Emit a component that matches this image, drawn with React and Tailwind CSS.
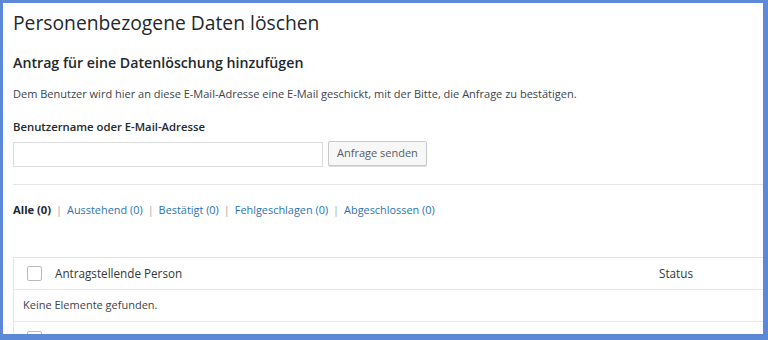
import React from 'react';

const filters = [
  { label: 'Ausstehend', count: 0 },
  { label: 'Bestätigt', count: 0 },
  { label: 'Fehlgeschlagen', count: 0 },
  { label: 'Abgeschlossen', count: 0 },
];

const Checkbox = () => (
  <span className="block w-[15px] h-[15px] border border-[#b7bbc0] rounded-[2px] bg-white shrink-0" />
);

const App = () => {
  return (
    <div
      className="w-[768px] h-[340px] overflow-hidden bg-white border-[#5b89d8] border-t-[3px] border-l-[3px] border-r-[5px] border-b-[6px] text-[#3c434a]"
      style={{ fontFamily: '"Open Sans", "Noto Sans", sans-serif' }}
    >
      <div className="pl-[10px] pt-[7px]">
        {/* Seitentitel */}
        <h1 className="text-[19.3px] leading-[26px] text-[#23282d] font-normal">
          Personenbezogene Daten löschen
        </h1>

        <h2 className="mt-[17px] text-[14.2px] leading-[20px] font-semibold text-[#23282d]">
          Antrag für eine Datenlöschung hinzufügen
        </h2>

        <p className="mt-[13px] text-[11px] leading-[16px]">
          Dem Benutzer wird hier an diese E-Mail-Adresse eine E-Mail geschickt, mit der Bitte, die Anfrage zu bestätigen.
        </p>

        {/* Formular */}
        <label className="block mt-[17px] text-[11.3px] leading-[16px] font-semibold text-[#23282d]">
          Benutzername oder E-Mail-Adresse
        </label>
        <div className="flex items-start gap-[5px] mt-[6px]">
          <input
            type="text"
            className="w-[310px] h-[25px] mt-[1px] border border-[#dcdcde] bg-white outline-none"
          />
          <button className="h-[25px] px-[8px] border border-[#c9cacc] rounded-[2px] bg-[#f7f7f7] text-[11px] text-[#555d66] shadow-[0_1px_0_#dcdcdc]">
            Anfrage senden
          </button>
        </div>

        <div className="mt-[17px] h-px bg-[#e4e4e4]" />

        {/* Filter-Links */}
        <ul className="flex items-center mt-[17px] text-[10.9px] leading-[16px]">
          <li className="font-bold text-[#23282d] text-[11.2px]">Alle (0)</li>
          {filters.map((f) => (
            <li key={f.label} className="flex items-center">
              <span className="pl-[5px] pr-[5px] text-[#a0a5aa]">|</span>
              <a className="text-[#2a74b0]">
                {f.label} ({f.count})
              </a>
            </li>
          ))}
        </ul>

        {/* Tabelle */}
        <div className="mt-[39px] border-t border-l border-[#e3e4e6] text-[11px]">
          <div className="flex items-center h-[32px] border-b border-[#e9eaeb]">
            <div className="w-[41px] flex justify-center">
              <Checkbox />
            </div>
            <div className="flex-1 text-[11.7px] text-[#32373c]">Antragstellende Person</div>
            <div className="w-[104px] text-[11.7px] text-[#32373c]">Status</div>
          </div>
          <div className="flex items-center h-[32px] pl-[9px] border-b border-[#e9eaeb]">
            Keine Elemente gefunden.
          </div>
          <div className="flex items-start h-[32px] pt-[9px]">
            <div className="w-[41px] flex justify-center">
              <Checkbox />
            </div>
            <div className="flex-1 text-[11.7px] text-[#32373c]">Antragstellende Person</div>
            <div className="w-[104px] text-[11.7px] text-[#32373c]">Status</div>
          </div>
        </div>
      </div>
    </div>
  );
};

export default App;
